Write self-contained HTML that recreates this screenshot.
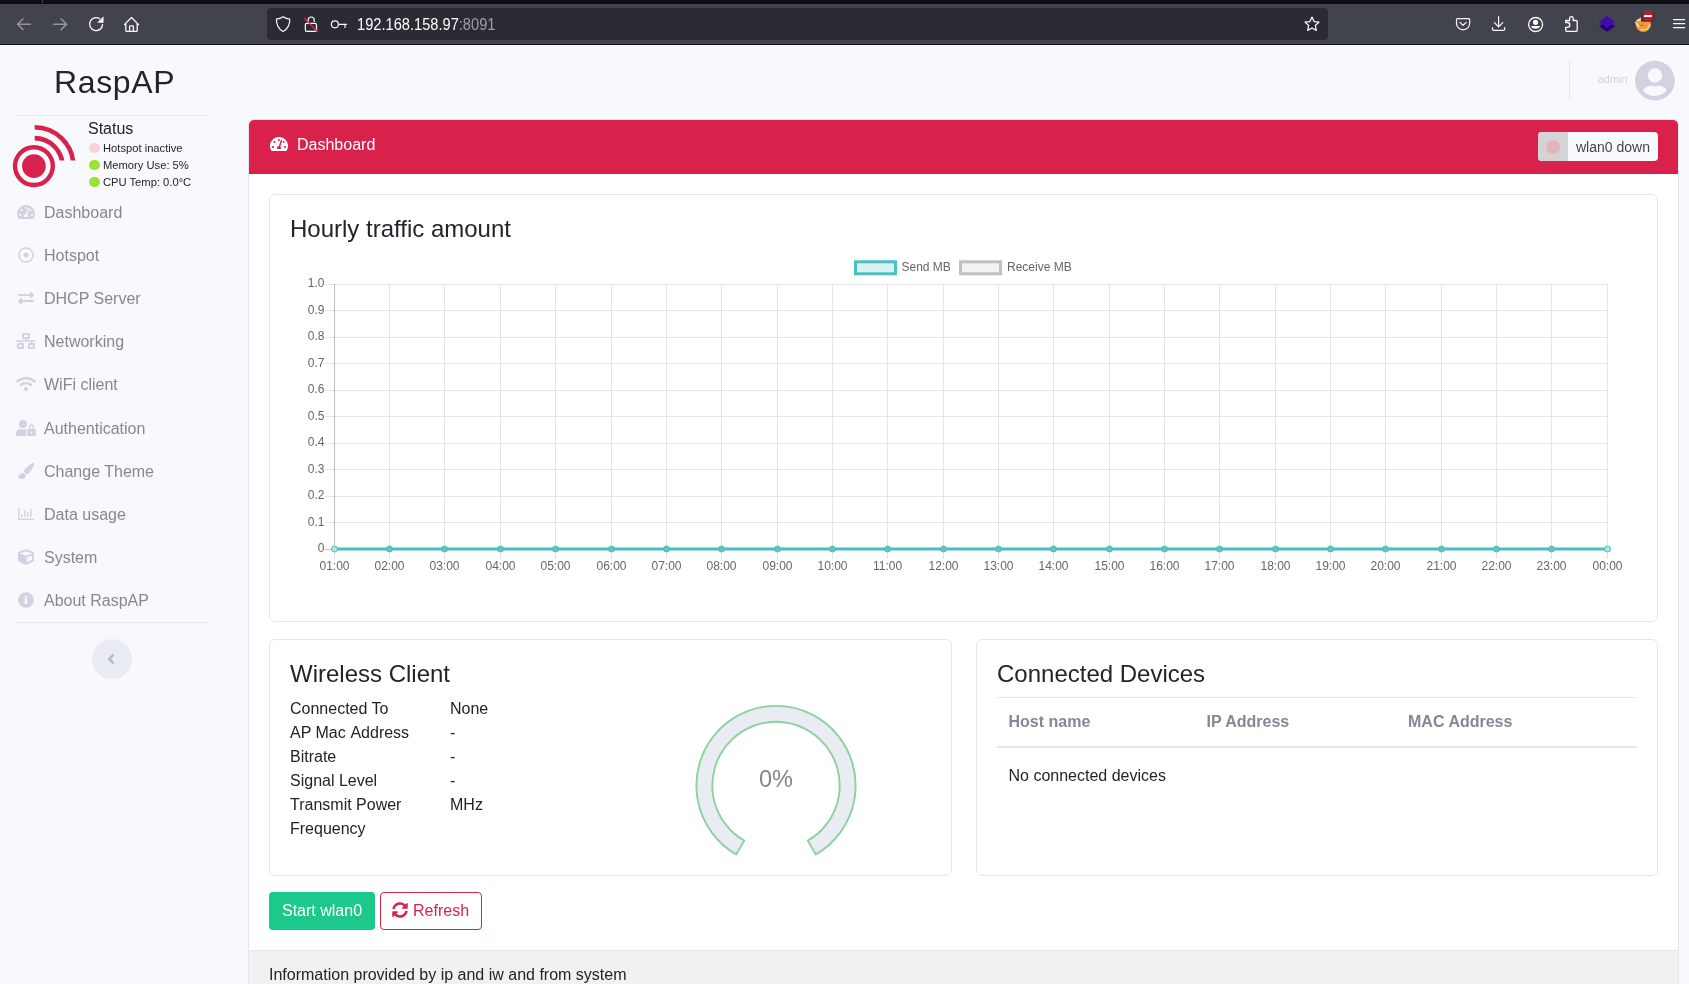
<!DOCTYPE html>
<html>
<head>
<meta charset="utf-8">
<title>RaspAP</title>
<style>
*{box-sizing:border-box;margin:0;padding:0}
html,body{width:1689px;height:984px;overflow:hidden;background:#f8f9fc;font-family:"Liberation Sans",sans-serif;color:#212529}
#w{position:absolute;left:0;top:0;width:1689px;height:984px;overflow:hidden;will-change:transform}
.a{position:absolute}
.t{position:absolute;white-space:nowrap;line-height:1}
svg{position:absolute;overflow:visible}
</style>
</head>
<body>
<div id="w">
<!-- browser chrome -->
<div class="a" style="left:0px;top:0px;width:1689px;height:45px;background:#42444d"></div>
<div class="a" style="left:0px;top:0px;width:1689px;height:4px;background:#0d0e12"></div>
<div class="a" style="left:42px;top:0px;width:1px;height:3px;background:#464648"></div>
<div class="a" style="left:0px;top:44px;width:1689px;height:1px;background:#101014"></div>
<div class="a" style="left:267px;top:8px;width:1061px;height:32px;border-radius:4px;background:#2b2c33"></div>
<svg style="left:0;top:0" width="1689" height="45" viewBox="0 0 1689 45" fill="none" stroke-linecap="round" stroke-linejoin="round">
<path d="M30.500 24.200H17.500M23.100 18.800L17.500 24.200L23.100 29.600" stroke="#92939d" stroke-width="1.5"/>
<path d="M53.500 24.200H66.700M61.100 18.800L66.700 24.200L61.100 29.600" stroke="#92939d" stroke-width="1.5"/>
<path d="M102.6 24.6A6.5 6.5 0 1 1 99.6 18.6" stroke="#fbfbfe" stroke-width="1.3"/>
<path d="M103.2 17.2V22.4H98Z" fill="#fbfbfe" stroke="#fbfbfe" stroke-width="0.6"/>
<path d="M124.4 24.6L131.5 17.5L138.6 24.6M125.8 23.6V30.2Q125.8 31.4 127 31.4H136Q137.2 31.4 137.200 30.2V23.6M129.6 31.2V26.6Q129.6 25.8 130.4 25.8H132.600Q133.400 25.8 133.400 26.6V31.2" stroke="#fbfbfe" stroke-width="1.3"/>
<path d="M283.1 16.7C285.5 18.3 287.700 18.9 289.800 19.1C289.800 25.5 287.700 29.3 283.100 31.5C278.500 29.3 276.400 25.500 276.400 19.100C278.500 18.900 280.700 18.300 283.100 16.700Z" stroke="#fbfbfe" stroke-width="1.2"/>
<rect x="305.3" y="23.3" width="11.2" height="8" rx="1.6" stroke="#fbfbfe" stroke-width="1.2"/>
<path d="M308.2 23.2V20A3 3 0 0 1 314.2 20V21.4" stroke="#fbfbfe" stroke-width="1.2"/>
<path d="M304.5 18.4L317.6 31.8" stroke="#e22850" stroke-width="1.3"/>
<circle cx="334.9" cy="24.3" r="3.5" stroke="#fbfbfe" stroke-width="1.2"/><path d="M338.500 24.300H346.600M345 24.300V27.400" stroke="#fbfbfe" stroke-width="1.2"/>
<path d="M1312.00 17.00L1314.06 21.57L1319.04 22.11L1315.33 25.48L1316.35 30.39L1312.00 27.90L1307.65 30.39L1308.67 25.48L1304.96 22.11L1309.94 21.57Z" stroke="#fbfbfe" stroke-width="1.2"/>
<path d="M1457.500 18.600H1468.700Q1469.700 18.600 1469.700 19.600V23.200A6.600 6.600 0 0 1 1456.500 23.200V19.600Q1456.500 18.600 1457.500 18.600Z" stroke="#fbfbfe" stroke-width="1.2"/><path d="M1460 22.400L1463.100 25.400L1466.200 22.400" stroke="#fbfbfe" stroke-width="1.2"/>
<path d="M1498.600 16.600V26.600M1494.400 22.600L1498.600 26.800L1502.800 22.600M1492.500 27.600V29.200Q1492.500 30.400 1493.700 30.400H1503.500Q1504.700 30.400 1504.700 29.200V27.600" stroke="#fbfbfe" stroke-width="1.2"/>
<circle cx="1535.6" cy="24.5" r="7" stroke="#fbfbfe" stroke-width="1.3"/><circle cx="1535.5" cy="22.3" r="2.6" fill="#fbfbfe"/><path d="M1531 26.100H1540A4.600 3.400 0 0 1 1531 26.100Z" fill="#fbfbfe"/>
<path d="M1565.700 20.500H1569.600V18.400A1.800 1.800 0 0 1 1573.200 18.400V20.500H1576.200Q1577.200 20.500 1577.200 21.500V30.300Q1577.200 31.300 1576.200 31.300H1566.700Q1565.700 31.300 1565.700 30.300V27.300H1567.400A2.400 2.400 0 0 0 1567.400 22.500H1565.700Z" stroke="#fbfbfe" stroke-width="1.3"/>
<path d="M1607 20.600L1615.100 26.200L1607 31.800L1599.100 26.200Z" fill="#22007e" stroke="none"/>
<path d="M1607 16L1615.100 21.800L1607 28L1599.100 21.800Z" fill="#4409b4" stroke="none"/>
<circle cx="1643.300" cy="24.500" r="7.600" fill="#f29a35" stroke="none"/>
<path d="M1635.600 22.300L1638.800 26.600M1637 20.600L1640.600 19.400" stroke="#f0ece6" stroke-width="1.300"/>
<path d="M1649.800 24.200L1647.400 29.200L1641 29.900" stroke="#ddd6cc" stroke-width="1.200"/>
<path d="M1640.600 25.400H1643.300" stroke="#8a6a48" stroke-width="0.900"/>
<rect x="1641" y="11" width="14" height="10.800" rx="1.200" fill="#3a3b41" stroke="none"/>
<path d="M1641.600 11.300H1654.400" stroke="#5a5b62" stroke-width="0.600"/>
<circle cx="1648" cy="16.100" r="5.200" fill="#c9142f" stroke="none"/>
<rect x="1644" y="15.100" width="7.800" height="2" rx="0.300" fill="#fff" stroke="none"/>
<path d="M1673.500 19.600H1684.600M1673.500 23.600H1684.600M1673.500 27.600H1684.600" stroke="#fbfbfe" stroke-width="1.3"/>
</svg>
<div class="t" style="left:357px;top:17.6px;font-size:14.65px;color:#fbfbfe;transform:scaleY(1.12);transform-origin:0 12.4px">192.168.158.97<span style="color:#9d9da6">:8091</span></div>
<!-- sidebar -->
<div class="t" style="left:54.1px;top:66px;font-size:32px;color:#212529;letter-spacing:.6px">RaspAP</div>
<div class="a" style="left:16px;top:115px;width:192px;height:1px;background:#e6e8f1"></div>
<svg style="left:0;top:118px" width="90" height="76" viewBox="0 118 90 76"><defs><clipPath id="lc"><rect x="34.7" y="118" width="60" height="42.4"/></clipPath></defs>
<circle cx="33.9" cy="166.1" r="11.85" fill="#d8224c"/><circle cx="33.9" cy="166.1" r="18.9" fill="none" stroke="#d8224c" stroke-width="4.4"/>
<g clip-path="url(#lc)" fill="none" stroke="#d8224c" stroke-width="4.6"><circle cx="34.5" cy="166.1" r="28"/><circle cx="34.5" cy="166.1" r="38.9"/></g></svg>
<div class="t" style="left:88px;top:121px;font-size:16px;color:#212529">Status</div>
<div class="a" style="left:89px;top:142.6px;width:10.6px;height:10.6px;border-radius:50%;background:#f9d0d4"></div>
<div class="t" style="left:103px;top:143px;font-size:11.2px;color:#212529">Hotspot inactive</div>
<div class="a" style="left:89px;top:159.79999999999998px;width:10.6px;height:10.6px;border-radius:50%;background:#98e432"></div>
<div class="t" style="left:103px;top:160px;font-size:11.2px;color:#212529">Memory Use: 5%</div>
<div class="a" style="left:89px;top:176.6px;width:10.6px;height:10.6px;border-radius:50%;background:#98e432"></div>
<div class="t" style="left:103px;top:177px;font-size:11.2px;color:#212529">CPU Temp: 0.0°C</div>
<div class="t" style="left:44px;top:205px;font-size:16px;color:#858796">Dashboard</div>
<svg style="left:17.00px;top:204.10px" width="18.00" height="16.00" viewBox="0 0 576 512"><path fill="#d1d3e2" d="M288 32C128.94 32 0 160.94 0 320c0 52.8 14.25 102.26 39.06 144.8 5.61 9.62 16.3 15.2 27.44 15.2h443c11.14 0 21.83-5.58 27.44-15.2C561.75 422.26 576 372.8 576 320c0-159.06-128.94-288-288-288zm0 64c14.71 0 26.58 10.13 30.32 23.65-1.11 2.26-2.64 4.23-3.45 6.67l-9.22 27.67c-5.13 3.49-10.97 6.01-17.64 6.01-17.67 0-32-14.33-32-32S270.33 96 288 96zM96 384c-17.67 0-32-14.33-32-32s14.33-32 32-32 32 14.33 32 32-14.33 32-32 32zm48-160c-17.67 0-32-14.33-32-32s14.33-32 32-32 32 14.33 32 32-14.33 32-32 32zm246.77-72.41l-61.33 184C343.13 347.33 352 364.54 352 384c0 11.72-3.38 22.55-8.88 32H232.88c-5.5-9.45-8.88-20.28-8.88-32 0-33.94 26.5-61.43 59.9-63.59l61.34-184.01c4.17-12.56 17.73-19.45 30.36-15.17 12.57 4.19 19.35 17.79 15.17 30.36zm14.66 57.2l15.52-46.55c3.47-1.29 7.13-2.23 11.05-2.23 17.67 0 32 14.33 32 32s-14.33 32-32 32c-11.38-.01-20.89-6.28-26.57-15.22zM480 384c-17.67 0-32-14.33-32-32s14.33-32 32-32 32 14.33 32 32-14.33 32-32 32z"/></svg>
<div class="t" style="left:44px;top:248px;font-size:16px;color:#858796">Hotspot</div>
<svg style="left:18.00px;top:247.10px" width="16.00" height="16.00" viewBox="0 0 512 512"><path fill="#d1d3e2" d="M256 56c110.532 0 200 89.451 200 200 0 110.532-89.451 200-200 200-110.532 0-200-89.451-200-200 0-110.532 89.451-200 200-200m0-48C119.033 8 8 119.033 8 256s111.033 248 248 248 248-111.033 248-248S392.967 8 256 8zm0 168c-44.183 0-80 35.817-80 80s35.817 80 80 80 80-35.817 80-80-35.817-80-80-80z"/></svg>
<div class="t" style="left:44px;top:291px;font-size:16px;color:#858796">DHCP Server</div>
<svg style="left:18.00px;top:290.10px" width="16.00" height="16.00" viewBox="0 0 512 512"><path fill="#d1d3e2" d="M0 168v-16c0-13.255 10.745-24 24-24h360V80c0-21.367 25.899-32.042 40.971-16.971l80 80c9.372 9.373 9.372 24.569 0 33.941l-80 80C409.956 271.982 384 261.456 384 240v-48H24c-13.255 0-24-10.745-24-24zm488 152H128v-48c0-21.314-25.862-32.08-40.971-16.971l-80 80c-9.372 9.373-9.372 24.569 0 33.941l80 80C102.057 463.997 128 453.437 128 432v-48h360c13.255 0 24-10.745 24-24v-16c0-13.255-10.745-24-24-24z"/></svg>
<div class="t" style="left:44px;top:334px;font-size:16px;color:#858796">Networking</div>
<svg style="left:16.00px;top:333.10px" width="20.00" height="16.00" viewBox="0 0 640 512"><path fill="#d1d3e2" d="M640 264v-16c0-8.84-7.16-16-16-16H344v-40h72c17.67 0 32-14.33 32-32V32c0-17.67-14.33-32-32-32H224c-17.67 0-32 14.33-32 32v128c0 17.67 14.33 32 32 32h72v40H16c-8.84 0-16 7.16-16 16v16c0 8.84 7.16 16 16 16h104v40H64c-17.67 0-32 14.33-32 32v128c0 17.67 14.33 32 32 32h160c17.67 0 32-14.33 32-32V352c0-17.67-14.33-32-32-32h-56v-40h304v40h-56c-17.67 0-32 14.33-32 32v128c0 17.67 14.33 32 32 32h160c17.67 0 32-14.33 32-32V352c0-17.67-14.33-32-32-32h-56v-40h104c8.84 0 16-7.16 16-16zM256 128V64h128v64H256zm-64 320H96v-64h96v64zm352 0h-96v-64h96v64z"/></svg>
<div class="t" style="left:44px;top:377px;font-size:16px;color:#858796">WiFi client</div>
<svg style="left:16.00px;top:376.10px" width="20.00" height="16.00" viewBox="0 0 640 512"><path fill="#d1d3e2" d="M634.91 154.88C457.74-8.99 182.19-8.93 5.09 154.88c-6.66 6.16-6.79 16.59-.35 22.98l34.24 33.97c6.14 6.1 16.02 6.23 22.4.38 145.92-133.68 371.3-133.71 517.25 0 6.38 5.85 16.26 5.71 22.4-.38l34.24-33.97c6.43-6.39 6.3-16.82-.36-22.98zM320 352c-35.35 0-64 28.65-64 64s28.65 64 64 64 64-28.65 64-64-28.65-64-64-64zm202.67-83.59c-115.26-101.93-290.21-101.82-405.34 0-6.9 6.1-7.12 16.69-.57 23.15l34.44 33.99c6 5.92 15.66 6.32 22.05.8 83.95-72.57 209.74-72.41 293.49 0 6.39 5.52 16.05 5.13 22.05-.8l34.44-33.99c6.56-6.46 6.33-17.06-.56-23.15z"/></svg>
<div class="t" style="left:44px;top:421px;font-size:16px;color:#858796">Authentication</div>
<svg style="left:16.00px;top:420.10px" width="20.00" height="16.00" viewBox="0 0 640 512"><path fill="#d1d3e2" d="M224 256A128 128 0 1 0 96 128a128 128 0 0 0 128 128zm96 64a63.08 63.08 0 0 1 8.1-30.5c-4.8-.5-9.5-1.5-14.5-1.5h-16.7a174.08 174.08 0 0 1-145.8 0h-16.7A134.43 134.43 0 0 0 0 422.4V464a48 48 0 0 0 48 48h280.9a63.54 63.54 0 0 1-8.9-32zm288-32h-32v-80a80 80 0 0 0-160 0v80h-32a32 32 0 0 0-32 32v160a32 32 0 0 0 32 32h224a32 32 0 0 0 32-32V320a32 32 0 0 0-32-32zM496 432a32 32 0 1 1 32-32 32 32 0 0 1-32 32zm32-144h-64v-80a32 32 0 0 1 64 0z"/></svg>
<div class="t" style="left:44px;top:464px;font-size:16px;color:#858796">Change Theme</div>
<svg style="left:18.00px;top:463.10px" width="16.00" height="16.00" viewBox="0 0 512 512"><path fill="#d1d3e2" d="M167.02 309.34c-40.12 2.58-76.53 17.86-97.19 72.3-2.35 6.21-8 9.98-14.59 9.98-11.11 0-45.46-27.67-55.25-34.35C0 439.62 37.93 512 128 512c75.86 0 128-43.77 128-120.19 0-3.11-.65-6.08-.97-9.13l-88.01-73.34zM457.89 0c-15.16 0-29.37 6.71-40.21 16.45C213.27 199.05 192 203.34 192 257.09c0 13.7 3.25 26.76 8.73 38.7l63.82 53.18c7.21 1.8 14.64 3.03 22.39 3.03 62.11 0 98.11-45.47 211.16-256.46 7.38-14.35 13.9-29.85 13.9-45.99C512 20.64 486 0 457.89 0z"/></svg>
<div class="t" style="left:44px;top:507px;font-size:16px;color:#858796">Data usage</div>
<svg style="left:18.00px;top:506.10px" width="16.00" height="16.00" viewBox="0 0 512 512"><path fill="#d1d3e2" d="M396.8 352h22.4c6.4 0 12.8-6.4 12.8-12.8V108.8c0-6.4-6.4-12.8-12.8-12.8h-22.4c-6.4 0-12.8 6.4-12.8 12.8v230.4c0 6.4 6.4 12.8 12.8 12.8zm-192 0h22.4c6.4 0 12.8-6.4 12.8-12.8V140.8c0-6.4-6.4-12.8-12.8-12.8h-22.4c-6.4 0-12.8 6.4-12.8 12.8v198.4c0 6.4 6.4 12.8 12.8 12.8zm96 0h22.4c6.4 0 12.8-6.4 12.8-12.8V204.8c0-6.4-6.4-12.8-12.8-12.8h-22.4c-6.4 0-12.8 6.4-12.8 12.8v134.4c0 6.4 6.4 12.8 12.8 12.8zM496 400H48V80c0-8.84-7.16-16-16-16H16C7.16 64 0 71.16 0 80v336c0 17.67 14.33 32 32 32h464c8.84 0 16-7.16 16-16v-16c0-8.84-7.16-16-16-16zm-387.2-48h22.4c6.4 0 12.8-6.4 12.8-12.8v-70.4c0-6.4-6.4-12.8-12.8-12.8h-22.4c-6.4 0-12.8 6.4-12.8 12.8v70.4c0 6.4 6.4 12.8 12.8 12.8z"/></svg>
<div class="t" style="left:44px;top:550px;font-size:16px;color:#858796">System</div>
<svg style="left:18.00px;top:549.10px" width="16.00" height="16.00" viewBox="0 0 512 512"><path fill="#d1d3e2" d="M239.1 6.3l-208 78c-18.7 7-31.1 25-31.1 45v225.1c0 18.2 10.3 34.8 26.5 42.9l208 104c13.5 6.8 29.4 6.8 42.9 0l208-104c16.3-8.1 26.5-24.8 26.5-42.9V129.3c0-20-12.4-37.9-31.1-44.9l-208-78C262 2.2 250 2.2 239.1 6.3zM256 68.4l192 72v1.1l-192 78-192-78v-1.1l192-72zm32 356V275.500l160-65v133.900l-160 80z"/></svg>
<div class="t" style="left:44px;top:593px;font-size:16px;color:#858796">About RaspAP</div>
<svg style="left:18.00px;top:592.10px" width="16.00" height="16.00" viewBox="0 0 512 512"><path fill="#d1d3e2" d="M256 8C119.043 8 8 119.083 8 256c0 136.997 111.043 248 248 248s248-111.003 248-248C504 119.083 392.957 8 256 8zm0 110c23.196 0 42 18.804 42 42s-18.804 42-42 42-42-18.804-42-42 18.804-42 42-42zm56 254c0 6.627-5.373 12-12 12h-88c-6.627 0-12-5.373-12-12v-24c0-6.627 5.373-12 12-12h12v-64h-12c-6.627 0-12-5.373-12-12v-24c0-6.627 5.373-12 12-12h64c6.627 0 12 5.373 12 12v100h12c6.627 0 12 5.373 12 12v24z"/></svg>
<div class="a" style="left:16px;top:622px;width:192px;height:1px;background:#e6e8f1"></div>
<div class="a" style="left:92px;top:639px;width:40px;height:40px;border-radius:50%;background:#eaecf4"></div>
<svg style="left:107.30px;top:651.30px" width="8.00" height="16.00" viewBox="0 0 256 512"><path fill="#b7b9cc" d="M31.7 239l136-136c9.4-9.4 24.6-9.4 33.9 0l22.6 22.6c9.4 9.4 9.4 24.6 0 33.9L127.9 256l96.400 96.400c9.400 9.400 9.400 24.600 0 33.900L201.700 409c-9.400 9.400-24.600 9.400-33.900 0l-136-136c-9.500-9.400-9.500-24.600-.100-34z"/></svg>
<div class="a" style="left:1569px;top:61px;width:1px;height:38px;background:#e3e6f0"></div>
<div class="t" style="left:1597.7px;top:74px;font-size:11px;color:#d1d3e2">admin</div>
<svg style="left:1635.34px;top:60.00px" width="39.91" height="41.20" viewBox="0 0 496 512"><path fill="#d1d3e2" d="M248 8C111 8 0 119 0 256s111 248 248 248 248-111 248-248S385 8 248 8zm0 96c48.600 0 88 39.400 88 88s-39.400 88-88 88-88-39.400-88-88 39.400-88 88-88zm0 344c-58.700 0-111.300-26.600-146.500-68.200 18.800-35.400 55.600-59.800 98.500-59.800 2.400 0 4.800.4 7.100 1.100 13 4.200 26.600 6.900 40.900 6.900 14.300 0 28-2.700 40.900-6.900 2.300-.7 4.700-1.100 7.100-1.100 42.900 0 79.700 24.400 98.500 59.800C359.300 421.400 306.700 448 248 448z"/></svg>
<!-- main card -->
<div class="a" style="left:248px;top:119px;width:1431px;height:900px;background:#fff;border:1px solid #e3e6f0;border-radius:6px"></div>
<div class="a" style="left:249px;top:120px;width:1429px;height:54px;background:#d8224c;border-radius:5px 5px 0 0"></div>
<div class="t" style="left:297px;top:137px;font-size:16px;color:#fff">Dashboard</div>
<svg style="left:270.00px;top:136.40px" width="18.00" height="16.00" viewBox="0 0 576 512"><path fill="#fff" d="M288 32C128.94 32 0 160.94 0 320c0 52.8 14.25 102.26 39.06 144.8 5.61 9.62 16.3 15.2 27.44 15.2h443c11.14 0 21.83-5.58 27.44-15.2C561.75 422.26 576 372.8 576 320c0-159.06-128.94-288-288-288zm0 64c14.71 0 26.58 10.13 30.32 23.65-1.11 2.26-2.64 4.23-3.45 6.67l-9.22 27.67c-5.13 3.49-10.97 6.01-17.64 6.01-17.67 0-32-14.33-32-32S270.33 96 288 96zM96 384c-17.67 0-32-14.33-32-32s14.33-32 32-32 32 14.33 32 32-14.33 32-32 32zm48-160c-17.67 0-32-14.33-32-32s14.33-32 32-32 32 14.33 32 32-14.33 32-32 32zm246.77-72.41l-61.33 184C343.13 347.33 352 364.54 352 384c0 11.72-3.38 22.55-8.88 32H232.88c-5.5-9.45-8.88-20.28-8.88-32 0-33.94 26.5-61.43 59.9-63.59l61.34-184.01c4.17-12.56 17.73-19.45 30.36-15.17 12.57 4.19 19.35 17.79 15.17 30.36zm14.66 57.2l15.52-46.55c3.47-1.29 7.13-2.23 11.05-2.23 17.67 0 32 14.33 32 32s-14.33 32-32 32c-11.38-.01-20.89-6.28-26.57-15.22zM480 384c-17.67 0-32-14.33-32-32s14.33-32 32-32 32 14.33 32 32-14.33 32-32 32z"/></svg>
<div class="a" style="left:1538px;top:132px;width:120px;height:29px;background:#f8f9fc;border-radius:4px;overflow:hidden"><div class="a" style="left:0;top:0;width:30px;height:29px;background:#d4d4d7"></div><div class="a" style="left:8px;top:7.7px;width:14px;height:14px;border-radius:50%;background:#e2b5ba"></div></div>
<div class="t" style="left:1576px;top:140px;font-size:14px;color:#45474f">wlan0 down</div>
<div class="a" style="left:269px;top:194px;width:1389px;height:428px;background:#fff;border:1px solid #e3e6f0;border-radius:6px"></div>
<div class="t" style="left:290px;top:217px;font-size:24px;color:#212529">Hourly traffic amount</div>
<svg style="left:0;top:0" width="1689" height="984" viewBox="0 0 1689 984" font-family="Liberation Sans, sans-serif">
<path d="M334.5 550.0V559.0M389.5 284.0V559.0M444.5 284.0V559.0M500.5 284.0V559.0M555.5 284.0V559.0M611.5 284.0V559.0M666.5 284.0V559.0M721.5 284.0V559.0M777.5 284.0V559.0M832.5 284.0V559.0M887.5 284.0V559.0M943.5 284.0V559.0M998.5 284.0V559.0M1053.5 284.0V559.0M1109.5 284.0V559.0M1164.5 284.0V559.0M1219.5 284.0V559.0M1275.5 284.0V559.0M1330.5 284.0V559.0M1385.5 284.0V559.0M1441.5 284.0V559.0M1496.5 284.0V559.0M1551.5 284.0V559.0M1607.5 284.0V559.0M325 284.5H1608M325 310.5H1608M325 337.5H1608M325 363.5H1608M325 390.5H1608M325 416.5H1608M325 443.5H1608M325 469.5H1608M325 496.5H1608M325 522.5H1608" stroke="#000" stroke-opacity="0.1" stroke-width="1" fill="none" shape-rendering="crispEdges"/>
<path d="M334.5 284.0V550.0M325 549.5H1608" stroke="#000" stroke-opacity="0.25" stroke-width="1" fill="none" shape-rendering="crispEdges"/>
<text x="324.5" y="287" font-size="12" fill="#666" text-anchor="end">1.0</text>
<text x="324.5" y="314" font-size="12" fill="#666" text-anchor="end">0.9</text>
<text x="324.5" y="340" font-size="12" fill="#666" text-anchor="end">0.8</text>
<text x="324.5" y="367" font-size="12" fill="#666" text-anchor="end">0.7</text>
<text x="324.5" y="393" font-size="12" fill="#666" text-anchor="end">0.6</text>
<text x="324.5" y="420" font-size="12" fill="#666" text-anchor="end">0.5</text>
<text x="324.5" y="446" font-size="12" fill="#666" text-anchor="end">0.4</text>
<text x="324.5" y="473" font-size="12" fill="#666" text-anchor="end">0.3</text>
<text x="324.5" y="499" font-size="12" fill="#666" text-anchor="end">0.2</text>
<text x="324.5" y="526" font-size="12" fill="#666" text-anchor="end">0.1</text>
<text x="324.5" y="552" font-size="12" fill="#666" text-anchor="end">0</text>
<text x="334.5" y="570" font-size="12" fill="#666" text-anchor="middle">01:00</text>
<text x="389.5" y="570" font-size="12" fill="#666" text-anchor="middle">02:00</text>
<text x="444.5" y="570" font-size="12" fill="#666" text-anchor="middle">03:00</text>
<text x="500.5" y="570" font-size="12" fill="#666" text-anchor="middle">04:00</text>
<text x="555.5" y="570" font-size="12" fill="#666" text-anchor="middle">05:00</text>
<text x="611.5" y="570" font-size="12" fill="#666" text-anchor="middle">06:00</text>
<text x="666.5" y="570" font-size="12" fill="#666" text-anchor="middle">07:00</text>
<text x="721.5" y="570" font-size="12" fill="#666" text-anchor="middle">08:00</text>
<text x="777.5" y="570" font-size="12" fill="#666" text-anchor="middle">09:00</text>
<text x="832.5" y="570" font-size="12" fill="#666" text-anchor="middle">10:00</text>
<text x="887.5" y="570" font-size="12" fill="#666" text-anchor="middle">11:00</text>
<text x="943.5" y="570" font-size="12" fill="#666" text-anchor="middle">12:00</text>
<text x="998.5" y="570" font-size="12" fill="#666" text-anchor="middle">13:00</text>
<text x="1053.5" y="570" font-size="12" fill="#666" text-anchor="middle">14:00</text>
<text x="1109.5" y="570" font-size="12" fill="#666" text-anchor="middle">15:00</text>
<text x="1164.5" y="570" font-size="12" fill="#666" text-anchor="middle">16:00</text>
<text x="1219.5" y="570" font-size="12" fill="#666" text-anchor="middle">17:00</text>
<text x="1275.5" y="570" font-size="12" fill="#666" text-anchor="middle">18:00</text>
<text x="1330.5" y="570" font-size="12" fill="#666" text-anchor="middle">19:00</text>
<text x="1385.5" y="570" font-size="12" fill="#666" text-anchor="middle">20:00</text>
<text x="1441.5" y="570" font-size="12" fill="#666" text-anchor="middle">21:00</text>
<text x="1496.5" y="570" font-size="12" fill="#666" text-anchor="middle">22:00</text>
<text x="1551.5" y="570" font-size="12" fill="#666" text-anchor="middle">23:00</text>
<text x="1607.5" y="570" font-size="12" fill="#666" text-anchor="middle">00:00</text>
<rect x="855.5" y="261.8" width="40" height="12" fill="#dbf2f2" stroke="#4bc0c0" stroke-width="3"/>
<text x="901.5" y="271" font-size="12" fill="#666">Send MB</text>
<rect x="960.5" y="261.8" width="40" height="12" fill="#f2f2f2" stroke="#c0c0c0" stroke-width="3"/>
<text x="1007" y="271" font-size="12" fill="#666">Receive MB</text>
<path d="M334.5 549H1607.5" stroke="#4bbdbd" stroke-width="3" fill="none"/>
<circle cx="334.5" cy="549" r="3" fill="#b9e3e3" stroke="#4bbdbd" stroke-width="1"/>
<circle cx="389.5" cy="549" r="3" fill="#66c1c1" stroke="#4bbdbd" stroke-width="1"/>
<circle cx="444.5" cy="549" r="3" fill="#66c1c1" stroke="#4bbdbd" stroke-width="1"/>
<circle cx="500.5" cy="549" r="3" fill="#66c1c1" stroke="#4bbdbd" stroke-width="1"/>
<circle cx="555.5" cy="549" r="3" fill="#66c1c1" stroke="#4bbdbd" stroke-width="1"/>
<circle cx="611.5" cy="549" r="3" fill="#66c1c1" stroke="#4bbdbd" stroke-width="1"/>
<circle cx="666.5" cy="549" r="3" fill="#66c1c1" stroke="#4bbdbd" stroke-width="1"/>
<circle cx="721.5" cy="549" r="3" fill="#66c1c1" stroke="#4bbdbd" stroke-width="1"/>
<circle cx="777.5" cy="549" r="3" fill="#66c1c1" stroke="#4bbdbd" stroke-width="1"/>
<circle cx="832.5" cy="549" r="3" fill="#66c1c1" stroke="#4bbdbd" stroke-width="1"/>
<circle cx="887.5" cy="549" r="3" fill="#66c1c1" stroke="#4bbdbd" stroke-width="1"/>
<circle cx="943.5" cy="549" r="3" fill="#66c1c1" stroke="#4bbdbd" stroke-width="1"/>
<circle cx="998.5" cy="549" r="3" fill="#66c1c1" stroke="#4bbdbd" stroke-width="1"/>
<circle cx="1053.5" cy="549" r="3" fill="#66c1c1" stroke="#4bbdbd" stroke-width="1"/>
<circle cx="1109.5" cy="549" r="3" fill="#66c1c1" stroke="#4bbdbd" stroke-width="1"/>
<circle cx="1164.5" cy="549" r="3" fill="#66c1c1" stroke="#4bbdbd" stroke-width="1"/>
<circle cx="1219.5" cy="549" r="3" fill="#66c1c1" stroke="#4bbdbd" stroke-width="1"/>
<circle cx="1275.5" cy="549" r="3" fill="#66c1c1" stroke="#4bbdbd" stroke-width="1"/>
<circle cx="1330.5" cy="549" r="3" fill="#66c1c1" stroke="#4bbdbd" stroke-width="1"/>
<circle cx="1385.5" cy="549" r="3" fill="#66c1c1" stroke="#4bbdbd" stroke-width="1"/>
<circle cx="1441.5" cy="549" r="3" fill="#66c1c1" stroke="#4bbdbd" stroke-width="1"/>
<circle cx="1496.5" cy="549" r="3" fill="#66c1c1" stroke="#4bbdbd" stroke-width="1"/>
<circle cx="1551.5" cy="549" r="3" fill="#66c1c1" stroke="#4bbdbd" stroke-width="1"/>
<circle cx="1607.5" cy="549" r="3" fill="#b9e3e3" stroke="#4bbdbd" stroke-width="1"/>
</svg>
<!-- bottom cards -->
<div class="a" style="left:269px;top:639px;width:683px;height:237px;background:#fff;border:1px solid #e3e6f0;border-radius:6px"></div>
<div class="t" style="left:290px;top:662px;font-size:24px;color:#212529">Wireless Client</div>
<div class="t" style="left:290px;top:701px;font-size:16px;color:#212529">Connected To</div>
<div class="t" style="left:450px;top:701px;font-size:16px;color:#212529">None</div>
<div class="t" style="left:290px;top:725px;font-size:16px;color:#212529">AP Mac <span style="margin-left:.25px">Address</span></div>
<div class="t" style="left:450px;top:725px;font-size:16px;color:#212529">-</div>
<div class="t" style="left:290px;top:749px;font-size:16px;color:#212529">Bitrate</div>
<div class="t" style="left:450px;top:749px;font-size:16px;color:#212529">-</div>
<div class="t" style="left:290px;top:773px;font-size:16px;color:#212529">Signal Level</div>
<div class="t" style="left:450px;top:773px;font-size:16px;color:#212529">-</div>
<div class="t" style="left:290px;top:797px;font-size:16px;color:#212529">Transmit Power</div>
<div class="t" style="left:450px;top:797px;font-size:16px;color:#212529">MHz</div>
<div class="t" style="left:290px;top:821px;font-size:16px;color:#212529">Frequency</div>
<svg style="left:0;top:0" width="1689" height="984" viewBox="0 0 1689 984"><path d="M736.20 854.44A79.6 79.6 0 1 1 815.80 854.44L807.85 840.67A63.7 63.7 0 1 0 744.15 840.67Z" fill="#eaecf4" stroke="#8fd19e" stroke-width="1.9"/><text x="776" y="787" font-family="Liberation Sans, sans-serif" font-size="23.5" fill="#868686" text-anchor="middle">0%</text></svg>
<div class="a" style="left:976px;top:639px;width:682px;height:237px;background:#fff;border:1px solid #e3e6f0;border-radius:6px"></div>
<div class="t" style="left:997px;top:662px;font-size:24px;color:#212529">Connected Devices</div>
<div class="a" style="left:997px;top:697px;width:640px;height:1px;background:#e3e6f0"></div>
<div class="a" style="left:997px;top:746px;width:640px;height:2px;background:#e3e6f0"></div>
<div class="t" style="left:1008.5px;top:714px;font-size:16px;color:#858796;font-weight:bold">Host name</div>
<div class="t" style="left:1206.5px;top:714px;font-size:16px;color:#858796;font-weight:bold">IP <span style="margin-left:0">Address</span></div>
<div class="t" style="left:1408px;top:714px;font-size:16px;color:#858796;font-weight:bold">MAC <span style="margin-left:-.5px">Address</span></div>
<div class="t" style="left:1008.5px;top:768px;font-size:16px;color:#212529">No connected devices</div>
<div class="a" style="left:269px;top:892px;width:105.5px;height:38px;background:#1cc88a;border-radius:4px"></div>
<div class="t" style="left:282px;top:903px;font-size:16px;color:#fff">Start wlan0</div>
<div class="a" style="left:380px;top:892px;width:102px;height:38px;background:#fff;border:1px solid #d8224c;border-radius:4px"></div>
<div class="t" style="left:413px;top:903px;font-size:16px;color:#d8224c">Refresh</div>
<svg style="left:392.20px;top:902.10px" width="16.00" height="16.00" viewBox="0 0 512 512"><path fill="#d8224c" d="M370.72 133.28C339.458 104.008 298.888 87.962 255.848 88c-77.458.068-144.328 53.178-162.791 126.850-1.344 5.363-6.122 9.150-11.651 9.150H24.103c-7.498 0-13.194-6.807-11.807-14.176C33.933 94.924 134.813 8 256 8c66.448 0 126.791 26.136 171.315 68.685L463.030 40.970C478.149 25.851 504 36.559 504 57.941V192c0 13.255-10.745 24-24 24H345.941c-21.382 0-32.090-25.851-16.971-40.971l41.750-41.749zM32 296h134.059c21.382 0 32.090 25.851 16.971 40.971l-41.750 41.750c31.262 29.273 71.835 45.319 114.876 45.280 77.418-.070 144.315-53.144 162.787-126.849 1.344-5.363 6.122-9.150 11.651-9.150h57.304c7.498 0 13.194 6.807 11.807 14.176C478.067 417.076 377.187 504 256 504c-66.448 0-126.791-26.136-171.315-68.685L48.970 471.030C33.851 486.149 8 475.441 8 454.059V320c0-13.255 10.745-24 24-24z"/></svg>
<div class="a" style="left:249px;top:950px;width:1429px;height:40px;background:#f2f1f0;border-top:1px solid #e3e6f0"></div>
<div class="t" style="left:269px;top:967px;font-size:16px;color:#212529">Information provided by ip and iw and from system</div>
</div>
</body>
</html>
